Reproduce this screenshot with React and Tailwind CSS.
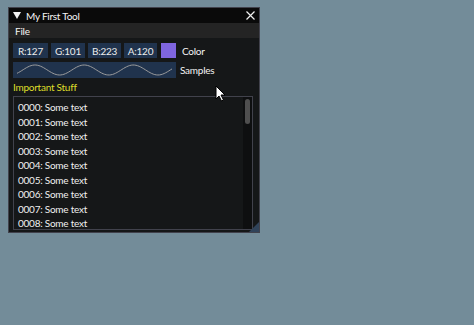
import React from 'react';

const font = { fontFamily: 'Lato, "Noto Sans", sans-serif' };

function wavePath() {
  const pts = [];
  for (let i = 0; i < 100; i++) {
    const x = 4 + (i * 155) / 99;
    const y = 8 - 5 * Math.sin(0.2 * i - 0.73);
    pts.push(`${i ? 'L' : 'M'}${x.toFixed(2)} ${y.toFixed(2)}`);
  }
  return pts.join(' ');
}

const lines = Array.from({ length: 9 }, (_, i) => `${String(i).padStart(4, '0')}: Some text`);

function Field({ w, children }) {
  return (
    <div className={`${w} h-[15px] bg-[#20334d] flex items-center justify-center text-[#ececec]`}>{children}</div>
  );
}

export default function App() {
  return (
    <div className="relative w-[474px] h-[325px] bg-[#738c99] overflow-hidden pt-[7px] pl-[8px] text-[10px] leading-none tracking-[-0.25px]" style={font}>
      <div className="relative w-[252px] h-[226px] bg-[#151718] border border-[#41424c] flex flex-col overflow-hidden">
        <div className="h-[15px] bg-[#0a0a0a] flex items-center pl-[4px] pr-[4px] text-[#f4f4f4] shrink-0">
          <svg width="8" height="7" viewBox="0 0 8 7" className="mr-[5px]"><path d="M0 0H8L4 7Z" fill="#f5f5f5" /></svg>
          <span>My First Tool</span>
          <svg width="9" height="9" viewBox="0 0 9 9" className="ml-auto"><path d="M0.5 0.5L8.5 8.5M8.5 0.5L0.5 8.5" stroke="#f0f0f0" strokeWidth="1.2" /></svg>
        </div>
        <div className="h-[15px] bg-[#242424] flex items-center pl-[6px] text-[#f4f4f4] shrink-0">File</div>
        <div className="flex flex-col px-[4px] pt-[5px] flex-1 min-h-0">
          <div className="flex items-center gap-[3px]">
            <Field w="w-[35px]">R:127</Field>
            <Field w="w-[34px]">G:101</Field>
            <Field w="w-[33px]">B:223</Field>
            <Field w="w-[33px]">A:120</Field>
            <div className="w-[15px] h-[15px] bg-[#7f65df] ml-[1px]" />
            <span className="ml-[3px] text-[#f4f4f4]">Color</span>
          </div>
          <div className="flex items-center mt-[4px]">
            <div className="w-[163px] h-[16px] bg-[#20334d]">
              <svg width="163" height="16" viewBox="0 0 163 16"><path d={wavePath()} fill="none" stroke="#9c9c9c" strokeWidth="1" /></svg>
            </div>
            <span className="ml-[4px] text-[#f4f4f4]">Samples</span>
          </div>
          <div className="h-[12px] mt-[3px] flex items-center text-[#dede2a]">Important Stuff</div>
          <div className="relative flex-1 min-h-0 mt-[3px] mb-[2px] mr-[2px] border border-[#41424c] overflow-hidden">
            <div className="pl-[4px] pt-[3px] text-[#f0f0f0]">
              {lines.map((l) => (
                <div key={l} className="h-[14.5px] flex items-center">{l}</div>
              ))}
            </div>
            <div className="absolute top-0 right-0 bottom-0 w-[9px] bg-[#0e0f10] pt-[2px] flex justify-center">
              <div className="w-[5px] h-[25px] rounded-[3px] bg-[#4f4f4f]" />
            </div>
          </div>
        </div>
        <svg width="10" height="10" viewBox="0 0 10 10" className="absolute right-0 bottom-0"><path d="M10 0V10H0Z" fill="#30435a" /></svg>
      </div>
      <svg width="11" height="17" viewBox="0 0 11 17" className="absolute left-[215px] top-[85px]">
        <path d="M1 1V14L4 11L6.5 16L8.5 15L6 10H10Z" fill="#ffffff" stroke="#000000" strokeWidth="1" strokeLinejoin="round" />
      </svg>
    </div>
  );
}
